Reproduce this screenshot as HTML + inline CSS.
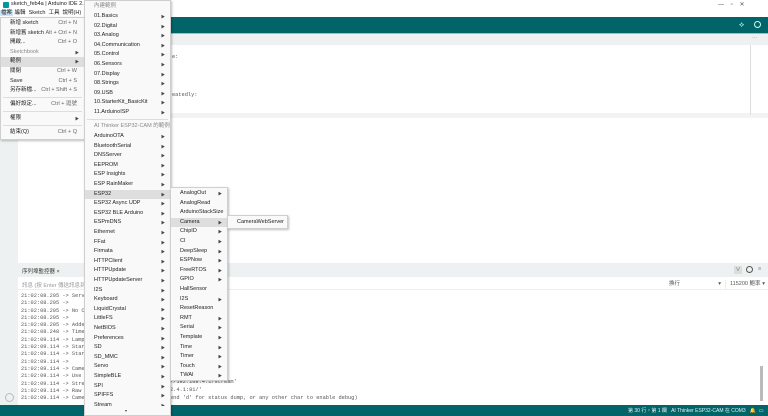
<!DOCTYPE html>
<html><head><meta charset="utf-8"><style>
*{margin:0;padding:0;box-sizing:border-box}
body{width:768px;height:416px;overflow:hidden;position:relative;background:#fff;font-family:"Liberation Sans","Noto Sans CJK TC",sans-serif;font-size:5.5px;color:#333}
.a{position:absolute;white-space:nowrap}
.menu{position:absolute;background:#f9f9f9;border:1px solid #cfcfcf;box-shadow:1px 1px 2px rgba(0,0,0,.25)}
.it{position:absolute;left:0;right:0;height:9.6px;line-height:9.6px;padding-left:9px;color:#222}
.it.h{background:#dedede}
.it .k{position:absolute;right:7px;color:#666}
.it .ar{position:absolute;right:5px;font-size:4px;color:#444}
.sep{position:absolute;left:2px;right:2px;height:1px;background:#ddd}
.mono{font-family:"Liberation Mono",monospace;font-size:5.3px;color:#555}
</style></head><body>
<!-- title bar -->
<div class="a" style="left:3px;top:2px;width:6px;height:6px;background:#00979d;border-radius:1px"></div>
<div class="a" style="left:11px;top:1px;font-size:5.5px;color:#222">sketch_feb4a | Arduino IDE 2.2.1</div>
<div class="a" style="left:0;top:8px;font-size:5.5px;color:#222;width:84px">
<span style="background:#cce4f7;padding:0 1px">檔案</span> 編輯 &nbsp;Sketch &nbsp;工具 &nbsp;說明(H)</div>
<div class="a" style="left:718px;top:1px;font-size:6px;color:#555">—&nbsp;&nbsp;&nbsp;&nbsp;▫&nbsp;&nbsp;&nbsp;&nbsp;✕</div>
<!-- toolbar -->
<div class="a" style="left:0;top:17px;width:768px;height:16px;background:#006468"></div>
<div class="a" style="left:0;top:33px;width:768px;height:1px;background:#7fcbcd"></div>
<div class="a" style="left:739px;top:20px;color:#cfe;font-size:8px">⟡</div>
<div class="a" style="left:754px;top:21px;width:7px;height:7px;border:1.5px solid #cfe;border-radius:50%"></div>
<!-- tab bar -->
<div class="a" style="left:0;top:34px;width:768px;height:11px;background:#eef1f1"></div>
<div class="a" style="left:752px;top:35px;color:#888">···</div>
<!-- sidebar -->
<div class="a" style="left:0;top:45px;width:18px;height:360px;background:#eef1f1"></div>
<div class="a" style="left:5px;top:393px;width:9px;height:9px;border:1px solid #bbb;border-radius:50%"></div>
<!-- editor -->
<div class="a" style="left:18px;top:113px;width:750px;height:5px;background:#f2f4f4"></div>
<div class="a" style="left:750px;top:45px;width:1px;height:70px;background:#ddd"></div>
<div class="a mono" style="left:172px;top:54px">e:</div>
<div class="a mono" style="left:172px;top:92px">eatedly:</div>
<!-- serial panel -->
<div class="a" style="left:18px;top:263px;width:750px;height:14px;background:#eef1f1"></div>
<div class="a" style="left:22px;top:267px;color:#333">序列埠監控器 ×</div>
<div class="a" style="left:734px;top:266px;width:8px;height:8px;background:#ddd;font-size:5px;color:#555;text-align:center">∨</div>
<div class="a" style="left:746px;top:266px;width:7px;height:7px;border:1.3px solid #555;border-radius:50%"></div>
<div class="a" style="left:758px;top:266px;color:#777">≡</div>
<div class="a" style="left:18px;top:277px;width:750px;height:13px;background:#fff;border-bottom:1px solid #eee"></div>
<div class="a" style="left:22px;top:281px;color:#999">訊息 (按 Enter 傳送訊息到</div>
<div class="a" style="left:666px;top:280px;width:60px;height:9px;border-right:1px solid #eee;color:#555;line-height:9px;padding-left:3px">換行<span style="position:absolute;right:4px">▾</span></div>
<div class="a" style="left:727px;top:280px;width:40px;height:9px;color:#555;line-height:9px;padding-left:3px">115200 鮑率<span style="position:absolute;right:2px">▾</span></div>
<div class="a mono" style="left:21px;top:293px;line-height:7.3px">21:02:08.205 -&gt; Serv<br>21:02:08.205 -&gt;<br>21:02:08.205 -&gt; No C<br>21:02:08.205 -&gt;<br>21:02:08.205 -&gt; Adde<br>21:02:08.248 -&gt; Time<br>21:02:09.114 -&gt; Lamp<br>21:02:09.114 -&gt; Star<br>21:02:09.114 -&gt; Star<br>21:02:09.114 -&gt;<br>21:02:09.114 -&gt; Came<br>21:02:09.114 -&gt; Use<br>21:02:09.114 -&gt; Stre<br>21:02:09.114 -&gt; Raw<br>21:02:09.114 -&gt; Came</div>
<div class="a mono" style="left:170px;top:378px;line-height:8px">//192.168.4.1/stream'<br>2.4.1:81/'<br>end 'd' for status dump, or any other char to enable debug)</div>
<div class="a" style="left:760px;top:366px;width:3px;height:35px;background:#bbb"></div>
<!-- status bar -->
<div class="a" style="left:0;top:405px;width:768px;height:11px;background:#006468"></div>
<div class="a" style="left:628px;top:407px;color:#e8f4f4;font-size:5px">第 30 行，第 1 欄 &nbsp;&nbsp;AI Thinker ESP32-CAM 在 COM3 &nbsp;&nbsp;🔔 &nbsp;▭</div>

<!-- file menu -->
<div class="menu" style="left:0;top:17px;width:85px;height:123px">
<div class="it" style="top:1px">新增 sketch<span class="k">Ctrl + N</span></div>
<div class="it" style="top:10.6px">新增舊 sketch<span class="k">Alt + Ctrl + N</span></div>
<div class="it" style="top:20.2px">開啟...<span class="k">Ctrl + O</span></div>
<div class="it" style="top:29.8px;color:#888">Sketchbook<span class="ar">▶</span></div>
<div class="it h" style="top:39.4px">範例<span class="ar">▶</span></div>
<div class="it" style="top:49px">關閉<span class="k">Ctrl + W</span></div>
<div class="it" style="top:58.6px">Save<span class="k">Ctrl + S</span></div>
<div class="it" style="top:68.2px">另存新檔...<span class="k">Ctrl + Shift + S</span></div>
<div class="sep" style="top:79px"></div>
<div class="it" style="top:82px">偏好設定...<span class="k">Ctrl + 逗號</span></div>
<div class="sep" style="top:93px"></div>
<div class="it" style="top:96px">權限<span class="ar">▶</span></div>
<div class="sep" style="top:107px"></div>
<div class="it" style="top:110px">結束(Q)<span class="k">Ctrl + Q</span></div>
</div>

<!-- examples menu -->
<div class="menu" style="left:84px;top:0;width:87px;height:416px">
<div class="it" style="top:1px;color:#888">內建範例</div>
<div class="it" style="top:11px">01.Basics<span class="ar">▶</span></div>
<div class="it" style="top:20.6px">02.Digital<span class="ar">▶</span></div>
<div class="it" style="top:30.2px">03.Analog<span class="ar">▶</span></div>
<div class="it" style="top:39.8px">04.Communication<span class="ar">▶</span></div>
<div class="it" style="top:49.4px">05.Control<span class="ar">▶</span></div>
<div class="it" style="top:59px">06.Sensors<span class="ar">▶</span></div>
<div class="it" style="top:68.6px">07.Display<span class="ar">▶</span></div>
<div class="it" style="top:78.2px">08.Strings<span class="ar">▶</span></div>
<div class="it" style="top:87.8px">09.USB<span class="ar">▶</span></div>
<div class="it" style="top:97.4px">10.StarterKit_BasicKit<span class="ar">▶</span></div>
<div class="it" style="top:107px">11.ArduinoISP<span class="ar">▶</span></div>
<div class="sep" style="top:118px"></div>
<div class="it" style="top:121px;color:#888">AI Thinker ESP32-CAM 的範例</div>
<div class="it" style="top:131px">ArduinoOTA<span class="ar">▶</span></div>
<div class="it" style="top:140.6px">BluetoothSerial<span class="ar">▶</span></div>
<div class="it" style="top:150.2px">DNSServer<span class="ar">▶</span></div>
<div class="it" style="top:159.8px">EEPROM<span class="ar">▶</span></div>
<div class="it" style="top:169.4px">ESP Insights<span class="ar">▶</span></div>
<div class="it" style="top:179px">ESP RainMaker<span class="ar">▶</span></div>
<div class="it h" style="top:188.6px">ESP32<span class="ar">▶</span></div>
<div class="it" style="top:198.2px">ESP32 Async UDP<span class="ar">▶</span></div>
<div class="it" style="top:207.8px">ESP32 BLE Arduino<span class="ar">▶</span></div>
<div class="it" style="top:217.4px">ESPmDNS<span class="ar">▶</span></div>
<div class="it" style="top:227px">Ethernet<span class="ar">▶</span></div>
<div class="it" style="top:236.6px">FFat<span class="ar">▶</span></div>
<div class="it" style="top:246.2px">Firmata<span class="ar">▶</span></div>
<div class="it" style="top:255.8px">HTTPClient<span class="ar">▶</span></div>
<div class="it" style="top:265.4px">HTTPUpdate<span class="ar">▶</span></div>
<div class="it" style="top:275px">HTTPUpdateServer<span class="ar">▶</span></div>
<div class="it" style="top:284.6px">I2S<span class="ar">▶</span></div>
<div class="it" style="top:294.2px">Keyboard<span class="ar">▶</span></div>
<div class="it" style="top:303.8px">LiquidCrystal<span class="ar">▶</span></div>
<div class="it" style="top:313.4px">LittleFS<span class="ar">▶</span></div>
<div class="it" style="top:323px">NetBIOS<span class="ar">▶</span></div>
<div class="it" style="top:332.6px">Preferences<span class="ar">▶</span></div>
<div class="it" style="top:342.2px">SD<span class="ar">▶</span></div>
<div class="it" style="top:351.8px">SD_MMC<span class="ar">▶</span></div>
<div class="it" style="top:361.4px">Servo<span class="ar">▶</span></div>
<div class="it" style="top:371px">SimpleBLE<span class="ar">▶</span></div>
<div class="it" style="top:380.6px">SPI<span class="ar">▶</span></div>
<div class="it" style="top:390.2px">SPIFFS<span class="ar">▶</span></div>
<div class="it" style="top:399.8px;height:5px;overflow:hidden">Stream<span class="ar">▶</span></div>
<div class="a" style="left:40px;top:407px;font-size:4px;color:#444">▾</div>
</div>

<!-- ESP32 submenu -->
<div class="menu" style="left:170px;top:187px;width:58px;height:194px">
<div class="it" style="top:1px">AnalogOut<span class="ar">▶</span></div>
<div class="it" style="top:10.6px">AnalogRead</div>
<div class="it" style="top:20.2px">ArduinoStackSize</div>
<div class="it h" style="top:29.8px">Camera<span class="ar">▶</span></div>
<div class="it" style="top:39.4px">ChipID<span class="ar">▶</span></div>
<div class="it" style="top:49px">CI<span class="ar">▶</span></div>
<div class="it" style="top:58.6px">DeepSleep<span class="ar">▶</span></div>
<div class="it" style="top:68.2px">ESPNow<span class="ar">▶</span></div>
<div class="it" style="top:77.8px">FreeRTOS<span class="ar">▶</span></div>
<div class="it" style="top:87.4px">GPIO<span class="ar">▶</span></div>
<div class="it" style="top:97px">HallSensor</div>
<div class="it" style="top:106.6px">I2S<span class="ar">▶</span></div>
<div class="it" style="top:116.2px">ResetReason</div>
<div class="it" style="top:125.8px">RMT<span class="ar">▶</span></div>
<div class="it" style="top:135.4px">Serial<span class="ar">▶</span></div>
<div class="it" style="top:145px">Template<span class="ar">▶</span></div>
<div class="it" style="top:154.6px">Time<span class="ar">▶</span></div>
<div class="it" style="top:164.2px">Timer<span class="ar">▶</span></div>
<div class="it" style="top:173.8px">Touch<span class="ar">▶</span></div>
<div class="it" style="top:183.4px">TWAI<span class="ar">▶</span></div>
</div>

<!-- Camera submenu -->
<div class="menu" style="left:227px;top:215px;width:61px;height:14px">
<div class="it" style="top:1.5px">CameraWebServer</div>
</div>
</body></html>
